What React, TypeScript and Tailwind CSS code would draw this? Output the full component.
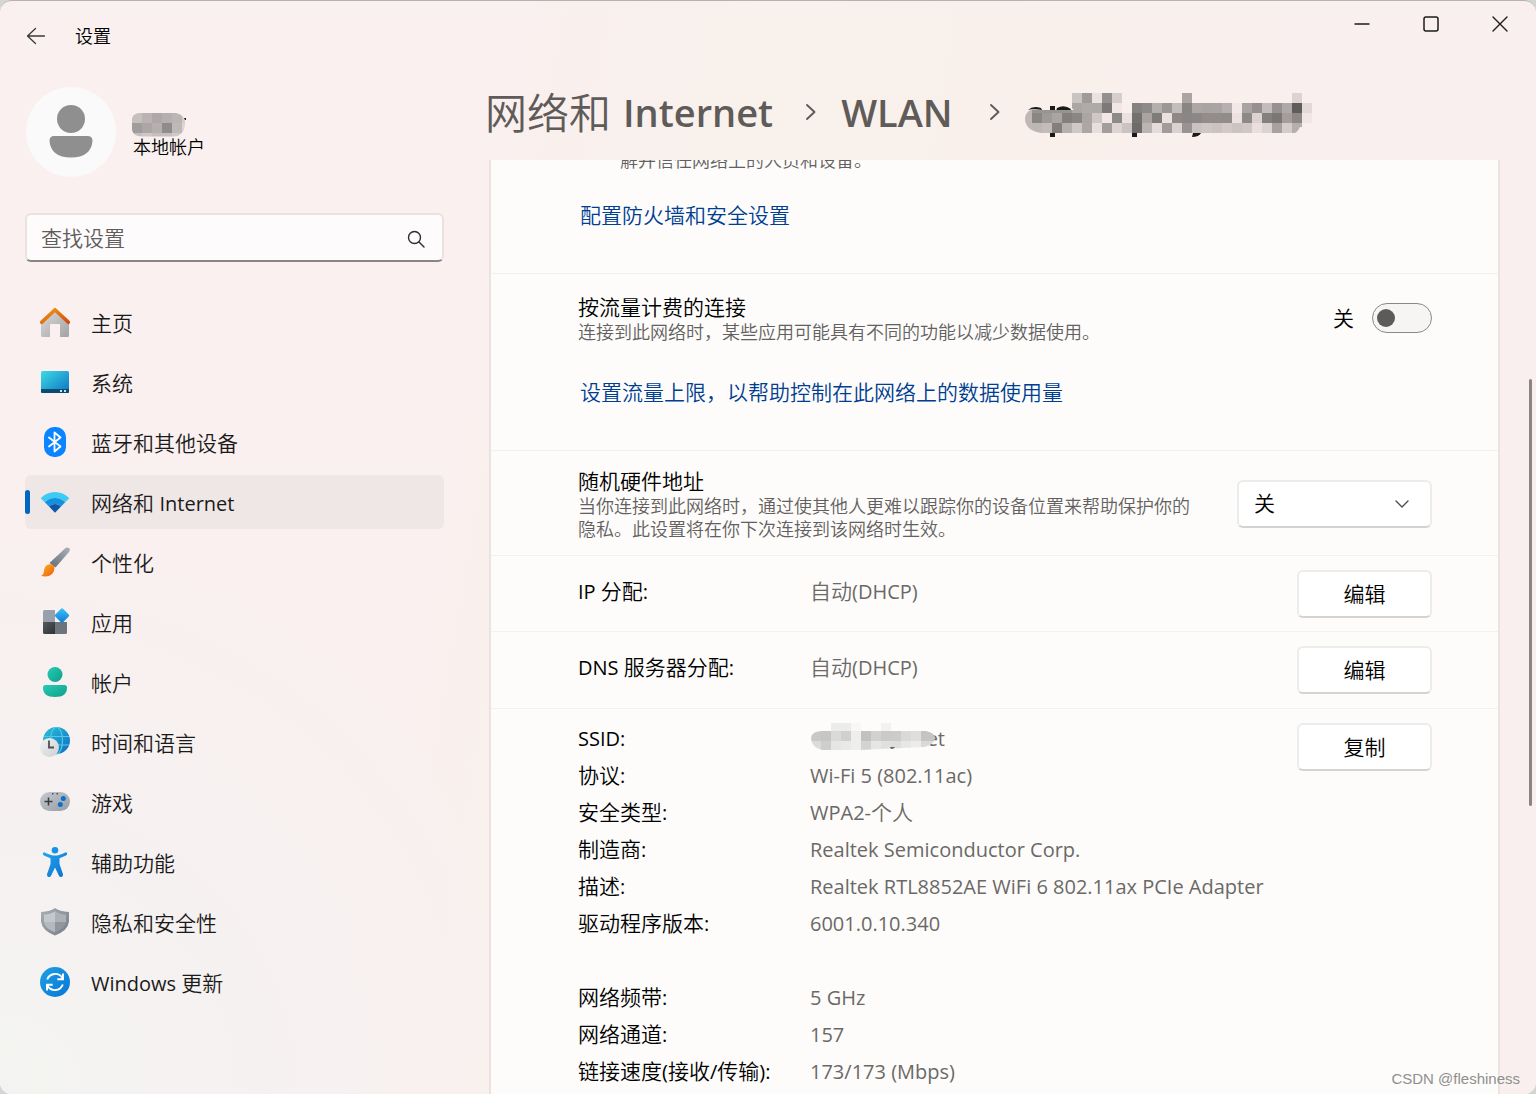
import type { ReactNode } from "react";

const FONT = "font-['Open_Sans','Noto_Sans_CJK_SC',sans-serif]";

function HomeIcon() {
  return (
    <svg viewBox="0 0 30 30" className="size-[30px]" aria-hidden="true">
      <defs>
        <linearGradient id="home-wall" x1="0" y1="0" x2="1" y2="1">
          <stop offset="0" stopColor="#dcdcdc" />
          <stop offset="1" stopColor="#a3a3a3" />
        </linearGradient>
        <linearGradient id="home-roof" x1="0" y1="0" x2="1" y2="1">
          <stop offset="0" stopColor="#f59a0c" />
          <stop offset="1" stopColor="#d34a14" />
        </linearGradient>
      </defs>
      <path d="M1 13 15 1.500 29 13V28.500q0 1.500-1.500 1.500H20V18q0-1-1-1h-8q-1 0-1 1v12H2.500Q1 30 1 28.500Z" fill="url(#home-wall)" />
      <path d="M1.700 15.300 15 2.700 28.300 15.300" fill="none" stroke="url(#home-roof)" strokeWidth="3.600" strokeLinecap="round" strokeLinejoin="round" />
    </svg>
  );
}

function SystemIcon() {
  return (
    <svg viewBox="0 0 30 30" className="size-[30px]" aria-hidden="true">
      <defs>
        <linearGradient id="sys-screen" x1="0" y1="0" x2="1" y2="1">
          <stop offset="0" stopColor="#3ddbe4" />
          <stop offset="1" stopColor="#0d72c4" />
        </linearGradient>
      </defs>
      <rect x="1" y="4" width="28" height="22" rx="1.500" fill="url(#sys-screen)" />
      <path d="M1 22h28v2.500q0 1.500-1.500 1.500h-25Q1 26 1 24.500Z" fill="#0c4a6e" />
      <rect x="20" y="23" width="2" height="2" fill="#bfe6f5" />
      <rect x="24" y="23" width="2" height="2" fill="#bfe6f5" />
    </svg>
  );
}

function BluetoothIcon() {
  return (
    <svg viewBox="0 0 30 30" className="size-[30px]" aria-hidden="true">
      <rect x="4" y="0" width="22" height="30" rx="10" fill="#0a84ff" />
      <path d="m9 10.500 11.500 9-6 5V5.500l6 5L9 19.500" fill="none" stroke="#fff" strokeWidth="1.800" strokeLinejoin="round" strokeLinecap="round" />
    </svg>
  );
}

function NetworkIcon() {
  return (
    <svg viewBox="0 0 30 30" className="size-[30px]" aria-hidden="true">
      <path d="M.7 11.300C8.500 3 21.500 3 29.300 11.300L25.200 15.300C19.500 9.500 10.500 9.500 4.800 15.300Z" fill="#3ccbf4" />
      <path d="M4.800 15.300C10.500 9.500 19.500 9.500 25.200 15.300L21 19.500C17.500 16 12.500 16 9 19.500Z" fill="#1590df" />
      <path d="M9 19.500C12.500 16 17.500 16 21 19.500L15 25.800Z" fill="#0d57a8" />
    </svg>
  );
}

function BrushIcon() {
  return (
    <svg viewBox="0 0 30 30" className="size-[30px]" aria-hidden="true">
      <defs>
        <linearGradient id="brush-handle" x1="1" y1="0" x2="0" y2="1">
          <stop offset="0" stopColor="#aab2ba" />
          <stop offset="1" stopColor="#636b73" />
        </linearGradient>
        <linearGradient id="brush-tip" x1="0" y1="0" x2="1" y2="1">
          <stop offset="0" stopColor="#fdb515" />
          <stop offset="1" stopColor="#ec5b1a" />
        </linearGradient>
      </defs>
      <path d="M25.500 1Q28 0 29.500 1.500 30.500 3 29 5L15.500 20.500 9.500 16Z" fill="url(#brush-handle)" />
      <path d="M8.500 17.500Q12 16.500 14 19.500 15.300 23 12.500 26.500 9 30.500 1 29 4 27 4 23.500 4.500 18.500 8.500 17.500Z" fill="url(#brush-tip)" />
    </svg>
  );
}

function AppsIcon() {
  return (
    <svg viewBox="0 0 30 30" className="size-[30px]" aria-hidden="true">
      <defs>
        <linearGradient id="app-dark" x1="0" y1="0" x2="1" y2="1">
          <stop offset="0" stopColor="#55595d" />
          <stop offset="1" stopColor="#2f3235" />
        </linearGradient>
        <linearGradient id="app-blue" x1="0" y1="0" x2="1" y2="1">
          <stop offset="0" stopColor="#3cc4f6" />
          <stop offset="1" stopColor="#0f78d8" />
        </linearGradient>
      </defs>
      <path d="M4.500 3H15v12H3V4.500Q3 3 4.500 3Z" fill="#98a1ab" />
      <path d="M3 15h12v12H4.500Q3 27 3 25.500Z" fill="url(#app-dark)" />
      <path d="M15 15h12v10.500q0 1.500-1.500 1.500H15Z" fill="#6d747c" />
      <rect x="16.500" y="3" width="11" height="11" rx="1.500" transform="rotate(45 22 8.500)" fill="url(#app-blue)" />
    </svg>
  );
}

function AccountIcon() {
  return (
    <svg viewBox="0 0 30 30" className="size-[30px]" aria-hidden="true">
      <defs>
        <linearGradient id="acc" x1="0" y1="0" x2="1" y2="1">
          <stop offset="0" stopColor="#25ccb4" />
          <stop offset="1" stopColor="#109e8a" />
        </linearGradient>
      </defs>
      <circle cx="15" cy="7.500" r="7.500" fill="url(#acc)" />
      <path d="M5.500 18h19Q27 18 27 20.500 27 30 15 30T3 20.500Q3 18 5.500 18Z" fill="url(#acc)" />
    </svg>
  );
}

function TimeIcon() {
  return (
    <svg viewBox="0 0 30 30" className="size-[30px]" aria-hidden="true">
      <defs>
        <linearGradient id="globe" x1="0" y1="0" x2="1" y2="1">
          <stop offset="0" stopColor="#2bc3d8" />
          <stop offset="1" stopColor="#0d6cc4" />
        </linearGradient>
        <linearGradient id="clock" x1="0" y1="0" x2="1" y2="1">
          <stop offset="0" stopColor="#f3f3f3" />
          <stop offset="1" stopColor="#cccfd2" />
        </linearGradient>
      </defs>
      <circle cx="16.500" cy="13.500" r="13.500" fill="url(#globe)" />
      <g fill="none" stroke="#4fc8e6" strokeWidth="1.200">
        <ellipse cx="16.500" cy="13.500" rx="6" ry="13.300" />
        <path d="M4 9.500h25M4 18h25" />
      </g>
      <circle cx="9.500" cy="20.500" r="9.500" fill="url(#clock)" />
      <path d="M9 13.500v7h5" fill="none" stroke="#4b4f53" strokeWidth="1.800" />
    </svg>
  );
}

function GameIcon() {
  return (
    <svg viewBox="0 0 30 30" className="size-[30px]" aria-hidden="true">
      <defs>
        <linearGradient id="pad" x1="0" y1="0" x2="1" y2="1">
          <stop offset="0" stopColor="#c6cacf" />
          <stop offset="1" stopColor="#969da4" />
        </linearGradient>
      </defs>
      <rect x="0" y="5" width="30" height="19" rx="9.500" fill="url(#pad)" />
      <path d="M8.500 10.500v8M4.500 14.500h8" stroke="#393c40" strokeWidth="1.500" />
      <circle cx="23.300" cy="11.500" r="2.500" fill="#0f6fcb" />
      <circle cx="20.300" cy="17.500" r="2.500" fill="#0f6fcb" />
      <path d="M12 6.800h1.500M16.500 6.800H18" stroke="#4c5054" strokeWidth="1.500" />
    </svg>
  );
}

function AccessIcon() {
  return (
    <svg viewBox="0 0 30 30" className="size-[30px]" aria-hidden="true">
      <defs>
        <linearGradient id="person" x1="0" y1="0" x2="1" y2="1">
          <stop offset="0" stopColor="#22a7f0" />
          <stop offset="1" stopColor="#0a70cf" />
        </linearGradient>
      </defs>
      <circle cx="15" cy="3.300" r="3.300" fill="#1593e6" />
      <path d="M4.200 5.200Q11 8.600 15 8.600T25.800 5.200Q27.300 5.200 27.200 7 27 8.200 25.500 8.800L19.500 11.300V17L23 27.300Q23.200 29.500 21.500 30 19.500 30.300 18.800 28.600L15 20.500 11.200 28.600Q10.500 30.300 8.500 30 6.800 29.500 7 27.300L10.500 17V11.300L4.500 8.800Q3 8.200 2.800 7 2.700 5.200 4.200 5.200Z" fill="url(#person)" />
    </svg>
  );
}

function ShieldIcon() {
  return (
    <svg viewBox="0 0 30 30" className="size-[30px]" aria-hidden="true">
      <defs>
        <linearGradient id="shield-rim" x1="0" y1="0" x2="1" y2="1">
          <stop offset="0" stopColor="#a9b0b7" />
          <stop offset="1" stopColor="#757c83" />
        </linearGradient>
      </defs>
      <path d="M15 1Q19.500 4.500 29 5V14.500Q28 23.500 15 28.500 2 23.500 1 14.500V5Q10.500 4.500 15 1Z" fill="url(#shield-rim)" />
      <path d="M15 4.200V15H4V7.600Q11 7 15 4.200Z" fill="#c3c8cd" />
      <path d="M15 4.200V15H26V7.600Q19 7 15 4.200Z" fill="#abb1b7" />
      <path d="M4 15H15V25.300Q4.500 21 4 15Z" fill="#b3b9bf" />
      <path d="M26 15H15V25.300Q25.500 21 26 15Z" fill="#8f969d" />
    </svg>
  );
}

function UpdateIcon() {
  return (
    <svg viewBox="0 0 30 30" className="size-[30px]" aria-hidden="true">
      <defs>
        <linearGradient id="upd" x1="0" y1="0" x2="1" y2="1">
          <stop offset="0" stopColor="#1ba1e6" />
          <stop offset="1" stopColor="#0a75d4" />
        </linearGradient>
      </defs>
      <circle cx="15" cy="15" r="15" fill="url(#upd)" />
      <g fill="none" stroke="#fff" strokeWidth="1.900">
        <path d="M7.200 12.500C9.800 5.500 19 5 22.800 11.500M23 6.500v5.700h-5.700" />
        <path d="M22.800 17.500C20.200 24.500 11 25 7.200 18.500M7 23.500v-5.700h5.700" />
      </g>
    </svg>
  );
}

const NAV: { label: string; icon: ReactNode; active?: boolean }[] = [
  { label: "主页", icon: <HomeIcon /> },
  { label: "系统", icon: <SystemIcon /> },
  { label: "蓝牙和其他设备", icon: <BluetoothIcon /> },
  { label: "网络和 Internet", icon: <NetworkIcon />, active: true },
  { label: "个性化", icon: <BrushIcon /> },
  { label: "应用", icon: <AppsIcon /> },
  { label: "帐户", icon: <AccountIcon /> },
  { label: "时间和语言", icon: <TimeIcon /> },
  { label: "游戏", icon: <GameIcon /> },
  { label: "辅助功能", icon: <AccessIcon /> },
  { label: "隐私和安全性", icon: <ShieldIcon /> },
  { label: "Windows 更新", icon: <UpdateIcon /> },
];

/* Pixelated masks: one colour per 10px cell, "" leaves a cell empty. */
const TITLE_CELLS: string[][] = [
  ["", "", "", "", "#c9c3c1", "#9f9b9a", "#ebe1df", "#93908f", "#d5cecd", "", "", "", "", "", "", "#aaa5a4", "", "", "", "", "", "", "", "", "", "", "#ddd3d3", ""],
  ["", "", "", "", "#aaa6a4", "#b0aaa8", "#aeaaa8", "#7d7978", "#f1e7e6", "", "#858280", "#8e8a89", "#b4aeac", "#9b9796", "#c5bdbc", "#898583", "#aca6a4", "#a9a3a2", "#aaa4a3", "#b8b0b0", "#f2e8e8", "#aaa3a3", "#969190", "#c4bcbc", "#979291", "#b0a9a9", "#605c5c", "#e3d9d9"],
  ["#8a8684", "#9e9a98", "#aaa5a3", "#827f7d", "#8a8684", "#aba6a4", "#cfc7c5", "#f1e7e6", "#8e8a89", "#ebe1e0", "#75716f", "#a9a3a1", "#7f7b7a", "#eae0df", "#8e8988", "#8a8685", "#8c8887", "#928d8c", "#928d8c", "#918c8b", "#ebe1e1", "#8e8989", "#dcd2d2", "#83807f", "#7b7776", "#a39d9c", "#8d8887", "#f0e6e6"],
  ["#bcb6b4", "#c3bcba", "#827f7d", "#b5afad", "#d0c8c6", "#aca6a4", "#e8dedd", "#a39d9c", "#ddd3d2", "#cbc3c2", "#6f6b6a", "#bbb4b3", "#e5dbdb", "#a19c9b", "#dbd1d1", "#989392", "#cac2c1", "#cfc6c6", "#cbc3c2", "#d3c9c9", "#cbc2c2", "#d0c7c6", "#e9dfdf", "#dcd2d2", "#a7a1a0", "#d4cbcb", "#b5aead", ""],
];

const SSID_CELLS: string[][] = [
  ["", "", "#ececeb", "#ececeb", "#f8f7f6", "", "", "#f3f2f1", "", "", "", ""],
  ["#c8c8c7", "#c6c6c5", "#dadad9", "#d0d0cf", "#efeeed", "#c1c1c0", "#d1d1d0", "#cacac9", "#cbcbca", "#d9d9d7", "#dededb", "#c4c4c3", "#c4c4c3"],
  ["#dbdbda", "#cececd", "#e6e6e5", "#e9e9e8", "#eeeeed", "#d3d3d2", "#e6e6e5", "#e0e0df", "#dededd", "#e7e7e5", "#edecea", "#d9d9d8", "#d9d9d8"],
];

function Cells({ rows, dx, dy }: { rows: string[][]; dx: number; dy: number }) {
  return (
    <g shapeRendering="crispEdges">
      {rows.flatMap((row, r) =>
        row.map((fill, c) =>
          fill ? <rect key={r + "-" + c} x={dx + c * 10} y={dy + r * 10} width="10" height="10" fill={fill} /> : null
        )
      )}
    </g>
  );
}

function TitleMask() {
  return (
    <svg role="img" aria-label="网络名称" viewBox="0 0 288 46" className="mt-2 h-[46px] w-[288px] shrink-0">
      <path d="M17 16C8 14 0 18 0 26s8 14 17 13.500Z" fill="#bfb8b6" />
      <path d="M3 17q5-5 13-2l1 2q-8-2-14 0ZM32 15q7-4 14 1l-1 2H31Z" fill="#1b1a1a" />
      <path d="M25 13h5v4h-5ZM25 40h5v4h-5ZM107 40h5v4h-5ZM168 40h8q-2 4-9 4Z" fill="#1b1a1a" />
      <clipPath id="title-clip">
        <path d="M47 0H288V30q-6 5-13 4-3 6-6 6H17Q7 39 7 30V17H49L42 10h5Z" />
      </clipPath>
      <g clipPath="url(#title-clip)">
        <rect x="7" y="17" width="42" height="13" fill="#979391" />
        <Cells rows={TITLE_CELLS} dx={7} dy={0} />
      </g>
    </svg>
  );
}

function SsidMask() {
  return (
    <svg aria-hidden="true" viewBox="0 0 125 27" className="absolute -top-1 left-0 h-[27px] w-[125px]">
      <clipPath id="ssid-clip">
        <path d="M20 0H82V8H116Q125 10 125 15q-1 7-11 9L50 27H12Q1 24 1 15 2 8 12 8h8Z" />
      </clipPath>
      <g clipPath="url(#ssid-clip)">
        <Cells rows={SSID_CELLS} dx={1} dy={-2} />
      </g>
      <path d="M80 24h5q-1 2-4 2Z" fill="#63615f" />
    </svg>
  );
}

function NameMask() {
  const rows = [
    ["#c5bfbf", "#b9b3b3", "#aea8a8", "#b5afaf", "#bcb5b5", "#d6cece"],
    ["#a29d9d", "#aca6a6", "#b5afaf", "#918c8c", "#bfb8b8", "#ddd4d4"],
    ["#c6bfbf", "#d0c5c7", "#c5bfbf", "#c5bfbf", "#d0c9c9", "#ddd4d4"],
  ];
  return (
    <svg role="img" aria-label="用户名" viewBox="0 0 54 24" className="block h-6 w-[54px]">
      <clipPath id="name-clip">
        <path d="M8 0H44Q54 2 53 12 52 23 42 23.500H10Q1 23 0 17V5Q2 0 8 0Z" />
      </clipPath>
      <g clipPath="url(#name-clip)">
        <Cells rows={rows} dx={0} dy={0} />
      </g>
      <path d="M52 5h2v2h-1Z" fill="#1b1b1b" />
    </svg>
  );
}

function Chevron() {
  return (
    <svg viewBox="0 0 12 18" className="h-[18px] w-3" aria-hidden="true">
      <path d="m2 2 7.500 7L2 16" fill="none" stroke="#5f5b59" strokeWidth="1.900" strokeLinecap="round" strokeLinejoin="round" />
    </svg>
  );
}

/* Sets Latin runs one step smaller and heavier than the Chinese text round them. */
function Mixed({ text }: { text: string }) {
  return (
    <>
      {text.split(/([\x21-\x7e][\x20-\x7e]*)/).map((part, i) =>
        i % 2 ? <span key={i} className="text-xl font-normal">{part}</span> : part
      )}
    </>
  );
}

function PushButton({ children, label }: { children: ReactNode; label: string }) {
  return (
    <button
      type="button"
      aria-label={label}
      className="h-12 w-[135px] shrink-0 rounded-md border-2 border-[#ececea] border-b-[#d4d3d1] bg-white pt-0.5 text-[21px] text-black"
    >
      {children}
    </button>
  );
}

const DETAILS: [string, string][] = [
  ["协议:", "Wi-Fi 5 (802.11ac)"],
  ["安全类型:", "WPA2-个人"],
  ["制造商:", "Realtek Semiconductor Corp."],
  ["描述:", "Realtek RTL8852AE WiFi 6 802.11ax PCIe Adapter"],
  ["驱动程序版本:", "6001.0.10.340"],
];

const LINK_DETAILS: [string, string][] = [
  ["网络频带:", "5 GHz"],
  ["网络通道:", "157"],
  ["链接速度(接收/传输):", "173/173 (Mbps)"],
];

function Detail({ name, value }: { name: string; value: ReactNode }) {
  return (
    <div className="flex h-[37px] items-center">
      <dt className="w-[232px] shrink-0 whitespace-nowrap text-black"><Mixed text={name} /></dt>
      <dd className="whitespace-nowrap text-[#6b6967]">{typeof value === "string" ? <Mixed text={value} /> : value}</dd>
    </div>
  );
}

export default function App() {
  return (
    <div className={`${FONT} h-screen bg-[#d4d6d6] font-[350] text-black`}>
      <div className="relative flex h-full flex-col overflow-hidden rounded-xl border-t border-[#b5b2b2] bg-[#f9f0ee] bg-[radial-gradient(circle_at_0%_100%,#f3f4f1_0%,#f6f1f1_14%,transparent_30%),linear-gradient(100deg,#f9f0ef_30%,#f9f1eb_46%,#f9f0eb_60%,#f9efee_76%,#f9efee_100%)]">
        <header className="flex h-[71px] shrink-0 items-start justify-between pr-0.5">
          <div className="flex h-[70px] items-center gap-[29px] pl-[26px]">
            <button type="button" aria-label="返回" className="flex w-5 justify-center">
              <svg viewBox="0 0 20 18" className="h-[18px] w-5" aria-hidden="true">
                <path d="M18.500 9H1.500M9.500 1.500 1.500 9l8 7.500" fill="none" stroke="#3b3939" strokeWidth="1.300" strokeLinecap="round" strokeLinejoin="round" />
              </svg>
            </button>
            <span className="text-lg">设置</span>
          </div>
          <div className="flex h-[46px]">
            <button type="button" aria-label="最小化" className="grid w-[69px] place-items-center">
              <svg viewBox="0 0 16 16" className="size-4" aria-hidden="true">
                <path d="M.5 8h15" stroke="#1b1b1b" strokeWidth="1.400" />
              </svg>
            </button>
            <button type="button" aria-label="最大化" className="grid w-[69px] place-items-center">
              <svg viewBox="0 0 16 16" className="size-4" aria-hidden="true">
                <rect x="1" y="1" width="14" height="14" rx="2" fill="none" stroke="#1b1b1b" strokeWidth="1.500" />
              </svg>
            </button>
            <button type="button" aria-label="关闭" className="grid w-[69px] place-items-center">
              <svg viewBox="0 0 16 16" className="size-4" aria-hidden="true">
                <path d="m1 1 14 14M15 1 1 15" stroke="#1b1b1b" strokeWidth="1.400" strokeLinecap="round" />
              </svg>
            </button>
          </div>
        </header>

        <div className="flex min-h-0 flex-1">
          <aside className="w-[444px] shrink-0 pt-[15px] pl-[25px]">
            <div className="flex items-center gap-4 pl-px">
              <svg viewBox="0 0 90 90" className="size-[90px]" role="img" aria-label="头像">
                <circle cx="45" cy="45" r="45" fill="#fafafa" />
                <circle cx="45" cy="32" r="14" fill="#8f8f8f" />
                <path d="M28 49H61.500Q66.500 49 66.500 54 65 70.500 45 70.500T23.500 54Q23.500 49 28 49Z" fill="#8f8f8f" />
              </svg>
              <div className="pt-1.5">
                <NameMask />
                <div className="pl-px text-lg leading-5">本地帐户</div>
              </div>
            </div>

            <div className="relative mt-9">
              <input
                type="text"
                aria-label="查找设置"
                placeholder="查找设置"
                className="block h-[49px] w-full rounded-md border-2 border-[#ebe1e1] border-b-[#8a8484] bg-[#fdfbfb] pr-12 pl-3.5 text-[21px] placeholder:text-[#5f5d5d]"
              />
              <svg viewBox="0 0 18 18" className="absolute top-[17px] right-[19px] size-[18px]" aria-hidden="true">
                <circle cx="7.500" cy="7.500" r="6" fill="none" stroke="#2e2c2c" strokeWidth="1.400" />
                <path d="m12 12 5 5" stroke="#2e2c2c" strokeWidth="1.400" strokeLinecap="round" />
              </svg>
            </div>

            <nav className="mt-[33px] flex flex-col gap-1.5 text-[#1b1a1a]">
              {NAV.map((item) => (
                <a
                  key={item.label}
                  href="#"
                  aria-current={item.active ? "page" : undefined}
                  className={
                    item.active
                      ? "relative flex h-[54px] items-center gap-[21px] rounded-md bg-[#efe6e6] pl-[15px]"
                      : "flex h-[54px] items-center gap-[21px] pl-[15px]"
                  }
                >
                  {item.active && <span className="absolute left-0 h-6 w-[5px] rounded-full bg-[#0067c0]" />}
                  {item.icon}
                  <span className="pt-1 text-[21px]"><Mixed text={item.label} /></span>
                </a>
              ))}
            </nav>
          </aside>

          <main className="flex min-w-0 flex-1 flex-col pr-9 pl-[45px]">
            <h1 className="-ml-1 flex h-[88px] shrink-0 items-center pb-2 text-[#5f5b59]">
              <a href="#" className="flex items-center gap-3 whitespace-nowrap">
                <span className="text-[42px]">网络和</span>
                <span className="text-[38px] font-semibold">Internet</span>
              </a>
              <span className="mr-6 ml-8"><Chevron /></span>
              <a href="#" className="text-[38px] font-semibold">WLAN</a>
              <span className="mr-6 ml-9"><Chevron /></span>
              <TitleMask />
            </h1>

            <div className="min-h-0 flex-1 overflow-hidden border-x-2 border-[#ebe3e2] bg-[#fdfcfa]">
              <section className="flow-root h-[114px] border-b border-[#f8efe8] pl-[87px]">
                <p className="-mt-3 pl-[42px] text-lg leading-6 text-[#63615f]">解并信任网络上的人员和设备。</p>
                <a href="#" className="mt-[27px] ml-0.5 inline-block text-[21px] leading-8 text-[#003e92]">配置防火墙和安全设置</a>
              </section>

              <section className="h-[177px] border-b border-[#f8efe8] pt-5 pr-[66px] pl-[87px]">
                <div className="flex items-center justify-between">
                  <div>
                    <h2 id="metered" className="text-[21px] leading-[26px]">按流量计费的连接</h2>
                    <p className="text-lg leading-6 text-[#63615f]">连接到此网络时，某些应用可能具有不同的功能以减少数据使用。</p>
                  </div>
                  <div className="flex items-center gap-[18px] pb-0.5">
                    <span className="pt-0.5 text-[21px]">关</span>
                    <input
                      type="checkbox"
                      role="switch"
                      aria-labelledby="metered"
                      className="flex h-[30px] w-[60px] appearance-none items-center rounded-full border border-[#8b8988] bg-[#f6f5f4] pl-1 before:size-[18px] before:rounded-full before:bg-[#5d5b5a] checked:bg-[#0067c0]"
                    />
                  </div>
                </div>
                <a href="#" className="mt-8 ml-0.5 inline-block text-[21px] leading-8 text-[#003e92]">设置流量上限，以帮助控制在此网络上的数据使用量</a>
              </section>

              <section className="flex h-[105px] items-center justify-between border-b border-[#f8efe8] pt-0.5 pr-[66px] pl-[87px]">
                <div>
                  <h2 id="random" className="text-[21px] leading-7">随机硬件地址</h2>
                  <p className="w-[618px] text-lg leading-[23px] text-[#63615f]">
                    当你连接到此网络时，通过使其他人更难以跟踪你的设备位置来帮助保护你的隐私。此设置将在你下次连接到该网络时生效。
                  </p>
                </div>
                <div className="relative">
                  <select
                    aria-labelledby="random"
                    defaultValue="off"
                    className="block h-12 w-[195px] appearance-none rounded-md border-2 border-[#ececea] border-b-[#d4d3d1] bg-white pl-[15px] text-[21px]"
                  >
                    <option value="off">关</option>
                    <option value="on">开</option>
                    <option value="daily">每天更改</option>
                  </select>
                  <svg viewBox="0 0 14 8" className="pointer-events-none absolute top-5 right-[23px] h-2 w-3.5" aria-hidden="true">
                    <path d="m1 1 6 6 6-6" fill="none" stroke="#4f4d4c" strokeWidth="1.400" strokeLinecap="round" strokeLinejoin="round" />
                  </svg>
                </div>
              </section>

              <section className="flex h-[76px] items-center justify-between border-b border-[#f8efe8] pr-[66px] pl-[87px]">
                <dl className="pb-1 text-[21px]"><Detail name="IP 分配:" value="自动(DHCP)" /></dl>
                <PushButton label="编辑 IP 分配">编辑</PushButton>
              </section>

              <section className="flex h-[77px] items-center justify-between border-b border-[#f8efe8] pr-[66px] pl-[87px]">
                <dl className="pb-1 text-[21px]"><Detail name="DNS 服务器分配:" value="自动(DHCP)" /></dl>
                <PushButton label="编辑 DNS 服务器分配">编辑</PushButton>
              </section>

              <section className="flex items-start justify-between pt-3.5 pr-[66px] pl-[87px]">
                <dl className="-mt-[3px] text-[21px]">
                  <Detail
                    name="SSID:"
                    value={
                      <span className="relative flex h-6 w-[135px] items-center justify-end">
                        <Mixed text="et" />
                        <SsidMask />
                      </span>
                    }
                  />
                  {DETAILS.map(([k, v]) => <Detail key={k} name={k} value={v} />)}
                  <div className="h-[37px]" />
                  {LINK_DETAILS.map(([k, v]) => <Detail key={k} name={k} value={v} />)}
                </dl>
                <PushButton label="复制">复制</PushButton>
              </section>
            </div>
          </main>
        </div>

        <div className="absolute top-[378px] right-1 h-[427px] w-[3px] rounded-full bg-[#8a8584]" />
        <div className="absolute right-4 bottom-1 font-['Liberation_Sans',sans-serif] text-[15px] font-normal text-[#8f8f8f]">CSDN @fleshiness</div>
      </div>
    </div>
  );
}
